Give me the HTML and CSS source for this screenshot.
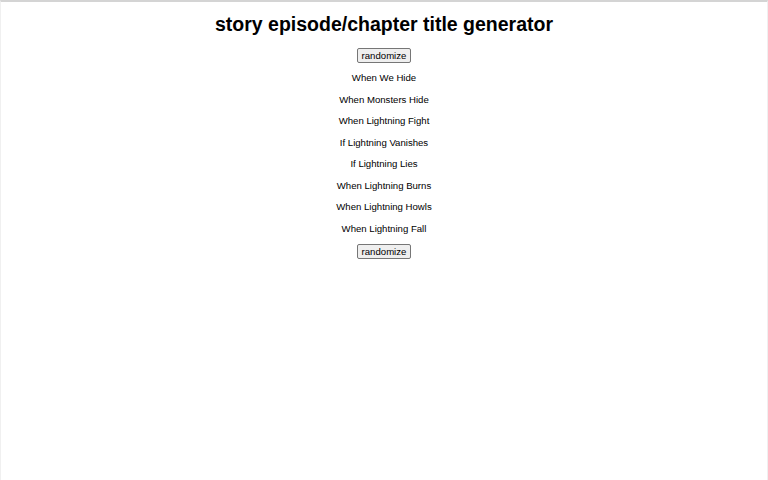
FILE: index.html
```html
<!DOCTYPE html>
<html lang="en">
<head>
<meta charset="utf-8">
<title>story episode/chapter title generator</title>
<link rel="stylesheet" href="styles.css">
</head>
<body>
<main class="frame">
  <h1 class="heading">story episode/chapter title generator</h1>
  <button class="shuffle" type="button">randomize</button>
  <ul class="titles">
    <li>When We Hide</li>
    <li>When Monsters Hide</li>
    <li>When Lightning Fight</li>
    <li>If Lightning Vanishes</li>
    <li>If Lightning Lies</li>
    <li>When Lightning Burns</li>
    <li>When Lightning Howls</li>
    <li>When Lightning Fall</li>
  </ul>
  <button class="shuffle shuffle--bottom" type="button">randomize</button>
</main>
</body>
</html>
```
FILE: styles.css
```css
html, body {
  margin: 0;
  height: 100%;
  background: #ffffff;
}

.frame {
  box-sizing: border-box;
  height: 100%;
  border-top: 2px solid #d4d4d4;
  border-left: 1px solid #f0f0f0;
  border-right: 1px solid #f0f0f0;
  display: flex;
  flex-direction: column;
  align-items: center;
  font-family: "Liberation Sans", Arial, sans-serif;
  color: #000;
}

.heading {
  margin: 11px 0 12px;
  font-size: 19.5px;
  line-height: 23px;
  font-weight: bold;
}

.shuffle {
  font-family: "Liberation Sans", Arial, sans-serif;
  font-size: 9.6px;
  line-height: 13px;
  padding: 0 4px;
  color: #000;
  background: #efefef;
  border: 1px solid #767676;
  border-radius: 2px;
}

.shuffle--bottom {
  margin-top: 4px;
}

.titles {
  list-style: none;
  margin: 4px 0 0;
  padding: 0;
  display: flex;
  flex-direction: column;
  align-items: center;
}

.titles li {
  font-size: 9.6px;
  line-height: 13px;
  padding: 4px 0 4.57px;
}
```
